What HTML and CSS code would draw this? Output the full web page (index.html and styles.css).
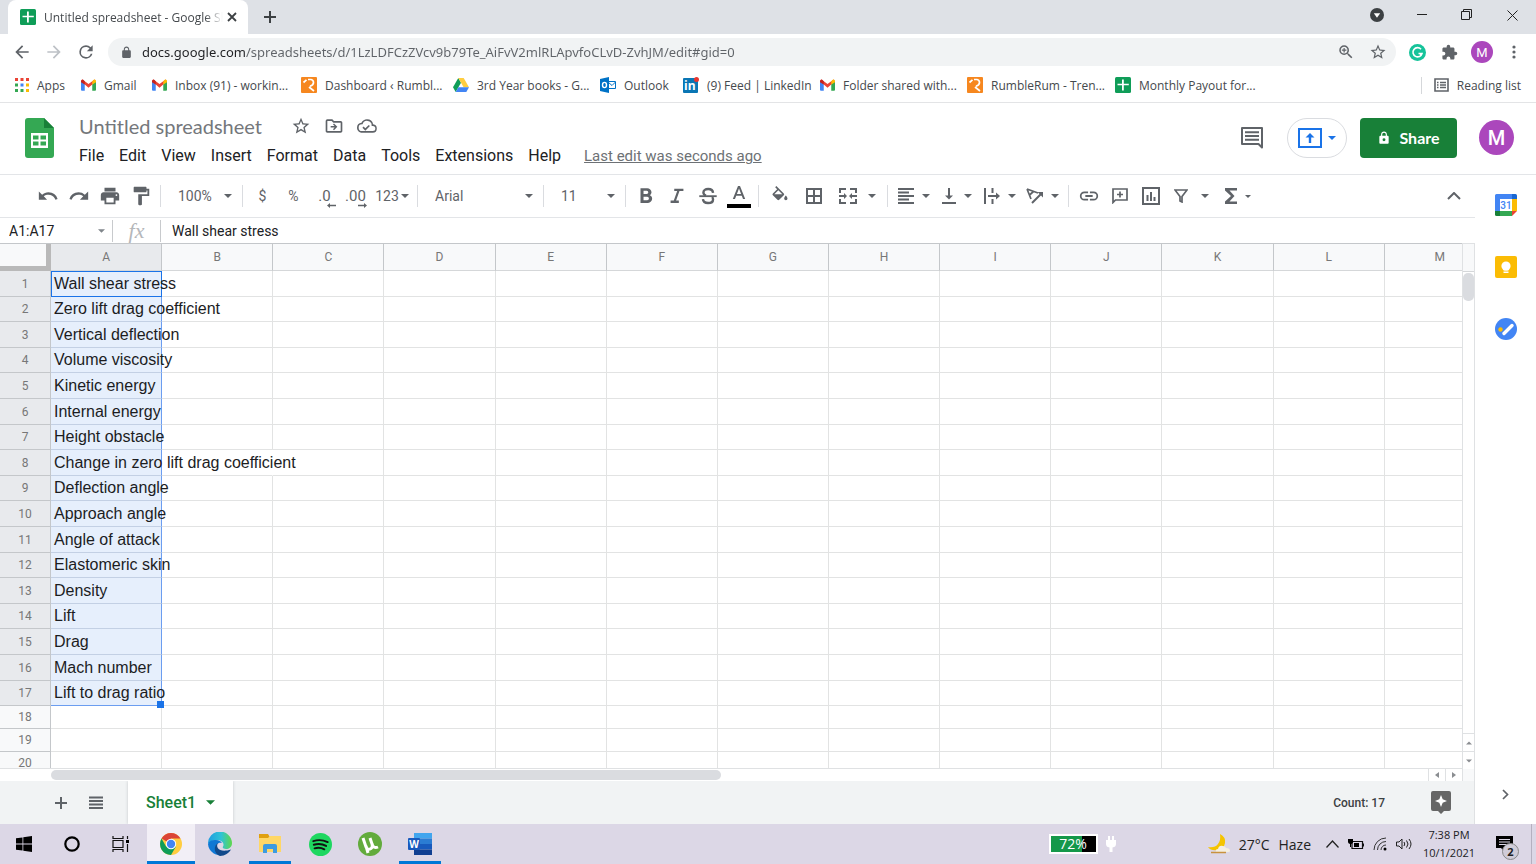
FILE: index.html
```html
<!DOCTYPE html>
<html lang="en">
<head>
<meta charset="utf-8">
<title>Untitled spreadsheet - Google Sheets</title>
<link rel="stylesheet" href="styles.css">
</head>
<body>
<svg class="sprite" aria-hidden="true">
  <symbol id="caret" viewBox="0 0 8 4"><path d="M0 0h8L4 4z"/></symbol>
  <symbol id="gmail" viewBox="0 0 16 12"><path fill="#4285f4" d="M0 2v9q0 1 1 1h3V4.500z"/><path fill="#34a853" d="M16 2v9q0 1-1 1h-3V4.500z"/><path fill="#ea4335" d="M1.500 0L8 4.800 14.500 0 16 2 8 9 0 2z"/><path fill="#c5221f" d="M0 2q0-2 2-1.800L4 2v3.500L0 3z"/><path fill="#fbbc04" d="M16 2q0-2-2-1.800L12 2v3.500L16 3z"/></symbol>
  <symbol id="sheetmark" viewBox="0 0 16 16"><rect width="16" height="16" rx="1.500" fill="#0f9d58"/><path fill="#fff" d="M7 2.500h1.800v4.200h5v1.600h-5v5.200H7V8.300H2.500V6.700H7z"/></symbol>
  <symbol id="rumble" viewBox="0 0 16 16"><rect width="16" height="16" rx="1" fill="#f6871f"/><path d="M2.500 5.500l3-2.700M7 2.500h3q2.500.5 2.500 3T9 9.300M8 10l5 4" fill="none" stroke="#fff" stroke-width="1.700"/></symbol>
  <symbol id="star" viewBox="0 0 24 24"><path d="M22 9.240l-7.190-.62L12 2 9.190 8.630 2 9.240l5.460 4.730L5.820 21 12 17.270 18.180 21l-1.630-7.030L22 9.240zM12 15.400l-3.760 2.270 1-4.280-3.320-2.880 4.380-.38L12 6.100l1.710 4.040 4.380.38-3.320 2.880 1 4.280L12 15.400z"/></symbol>
  <symbol id="lock" viewBox="0 0 24 24"><path d="M18 8h-1V6c0-2.760-2.240-5-5-5S7 3.240 7 6v2H6c-1.100 0-2 .9-2 2v10c0 1.100.9 2 2 2h12c1.100 0 2-.9 2-2V10c0-1.100-.9-2-2-2zM9 6c0-1.660 1.340-3 3-3s3 1.340 3 3v2H9V6z"/></symbol>
</svg>

<header class="browser">
  <div class="tabstrip">
    <div class="tab">
      <svg width="16" height="16"><use href="#sheetmark"/></svg>
      <span class="tab-title">Untitled spreadsheet - Google Sheets</span>
      <button class="plain" aria-label="Close tab"><svg width="10" height="10" viewBox="0 0 10 10"><path d="M1 1l8 8M9 1L1 9" stroke="#3c4043" stroke-width="1.800"/></svg></button>
    </div>
    <button class="plain newtab" aria-label="New tab"><svg width="12" height="12" viewBox="0 0 12 12"><path d="M6 0v12M0 6h12" stroke="#3c4043" stroke-width="2"/></svg></button>
    <div class="window-controls">
      <button class="plain" aria-label="Search tabs"><svg width="14" height="14" viewBox="0 0 14 14"><circle cx="7" cy="7" r="7" fill="#3c4043"/><path d="M3.800 5.200h6.400L7 9.800z" fill="#fff"/></svg></button>
      <button class="plain" aria-label="Minimize"><svg width="10" height="10" viewBox="0 0 10 10"><path d="M0 4.500h10" stroke="#222"/></svg></button>
      <button class="plain" aria-label="Restore"><svg width="12" height="12" viewBox="0 0 12 12"><path d="M.5 2.500h8v8h-8zM2.500 2.500v-2h8v8h-2" fill="none" stroke="#222"/></svg></button>
      <button class="plain" aria-label="Close"><svg width="11" height="11" viewBox="0 0 11 11"><path d="M.5.5l10 10M10.500.5l-10 10" stroke="#222"/></svg></button>
    </div>
  </div>

  <div class="navbar">
    <button class="plain" aria-label="Back"><svg width="20" height="20" viewBox="0 0 24 24" fill="#5f6368"><path d="M20 11H7.830l5.590-5.590L12 4l-8 8 8 8 1.410-1.410L7.830 13H20v-2z"/></svg></button>
    <button class="plain" aria-label="Forward"><svg width="20" height="20" viewBox="0 0 24 24" fill="#bdc1c6"><path d="M12 4l-1.410 1.410L16.170 11H4v2h12.170l-5.580 5.590L12 20l8-8z"/></svg></button>
    <button class="plain" aria-label="Reload"><svg width="20" height="20" viewBox="0 0 24 24" fill="#5f6368"><path d="M17.650 6.350A7.960 7.960 0 0 0 12 4a8 8 0 1 0 7.730 10h-2.080A6 6 0 1 1 12 6c1.660 0 3.140.69 4.220 1.780L13 11h7V4l-2.350 2.350z"/></svg></button>
    <div class="omnibox">
      <svg width="13" height="13" viewBox="0 0 24 24" fill="#5f6368"><use href="#lock"/></svg>
      <input class="address" aria-label="Address" value="docs.google.com/spreadsheets/d/1LzLDFCzZVcv9b79Te_AiFvV2mlRLApvfoCLvD-ZvhJM/edit#gid=0">
      <button class="plain" aria-label="Zoom"><svg width="18" height="18" viewBox="0 0 24 24" fill="#5f6368"><path d="M15.500 14h-.79l-.28-.27A6.470 6.470 0 0 0 16 9.500 6.500 6.500 0 1 0 9.500 16c1.610 0 3.090-.59 4.230-1.570l.27.28v.79l5 4.990L20.490 19l-4.990-5zm-6 0C7.010 14 5 11.990 5 9.500S7.010 5 9.500 5 14 7.010 14 9.500 11.990 14 9.500 14zM10.300 6.500H8.700v2.200H6.500v1.600h2.200v2.200h1.600v-2.200h2.200V8.700h-2.200z"/></svg></button>
      <button class="plain" aria-label="Bookmark"><svg width="18" height="18" fill="#5f6368"><use href="#star"/></svg></button>
    </div>
    <div class="extensions">
      <button class="plain" aria-label="Grammarly"><svg width="17" height="17" viewBox="0 0 17 17"><circle cx="8.500" cy="8.500" r="8.500" fill="#15c39a"/><path d="M12 5.200A4.600 4.600 0 1 0 13 9.500H9.500M11 11.500l2-2" fill="none" stroke="#fff" stroke-width="1.600"/></svg></button>
      <button class="plain" aria-label="Extensions"><svg width="17" height="17" viewBox="0 0 24 24" fill="#5f6368"><path d="M20.500 11H19V7c0-1.100-.9-2-2-2h-4V3.500a2.500 2.500 0 0 0-5 0V5H4c-1.100 0-1.990.9-1.990 2v3.800H3.500a2.700 2.700 0 0 1 0 5.400H2V20c0 1.100.9 2 2 2h3.800v-1.500a2.700 2.700 0 0 1 5.400 0V22H17c1.100 0 2-.9 2-2v-4h1.500a2.500 2.500 0 0 0 0-5z"/></svg></button>
      <button class="avatar small" aria-label="Profile">M</button>
      <button class="plain" aria-label="Browser menu"><svg width="4" height="14" viewBox="0 0 4 14" fill="#5f6368"><circle cx="2" cy="2" r="1.600"/><circle cx="2" cy="7" r="1.600"/><circle cx="2" cy="12" r="1.600"/></svg></button>
    </div>
  </div>

  <nav class="bookmarks">
    <a href="#"><svg width="14" height="14" viewBox="0 0 14 14"><path fill="#ea4335" d="M0 0h3v3H0zM5.500 0h3v3h-3zM11 0h3v3h-3z"/><path fill="#34a853" d="M0 5.500h3v3H0zM0 11h3v3H0z"/><path fill="#4285f4" d="M5.500 5.500h3v3h-3z"/><path fill="#fbbc04" d="M11 5.500h3v3h-3zM11 11h3v3h-3z"/><path fill="#34a853" d="M5.500 11h3v3h-3z"/></svg>Apps</a>
    <a href="#"><svg width="15" height="12"><use href="#gmail"/></svg>Gmail</a>
    <a href="#"><svg width="15" height="12"><use href="#gmail"/></svg>Inbox (91) - workin...</a>
    <a href="#"><svg width="16" height="16"><use href="#rumble"/></svg>Dashboard ‹ Rumbl...</a>
    <a href="#"><svg width="16" height="14" viewBox="0 0 16 14"><path fill="#0f9d58" d="M5.300 0L8 4.700 2.700 14 0 9.300z"/><path fill="#ffcd40" d="M5.300 0h5.400L16 9.300h-5.400z"/><path fill="#4285f4" d="M5.400 9.300H16L13.300 14H2.700z"/></svg>3rd Year books - G...</a>
    <a href="#"><svg width="16" height="16" viewBox="0 0 16 16"><path fill="#fff" stroke="#0072c6" d="M8 4.500h7.500v7H8z"/><path d="M8 5l4 3.500L15.500 5" fill="none" stroke="#0072c6"/><path fill="#0072c6" d="M0 2l9-2v16l-9-2z"/><ellipse cx="4.500" cy="8" rx="2" ry="2.600" fill="none" stroke="#fff" stroke-width="1.400"/></svg>Outlook</a>
    <a href="#"><svg width="16" height="16" viewBox="0 0 16 16"><rect y="1" width="15" height="15" rx="1" fill="#0a76b4"/><text x="1" y="13" fill="#fff" class="linkedin">in</text><circle cx="13.500" cy="2.500" r="2.500" fill="#e8362f"/></svg>(9) Feed | LinkedIn</a>
    <a href="#"><svg width="15" height="12"><use href="#gmail"/></svg>Folder shared with...</a>
    <a href="#"><svg width="16" height="16"><use href="#rumble"/></svg>RumbleRum - Tren...</a>
    <a href="#"><svg width="16" height="16"><use href="#sheetmark"/></svg>Monthly Payout for...</a>
    <button class="reading"><svg width="15" height="14" viewBox="0 0 15 14"><path d="M1 1h13v12H1z" fill="none" stroke="#5f6368" stroke-width="1.600"/><path d="M3 4.500h1.500M6 4.500h6M3 7h1.500M6 7h6M3 9.500h1.500M6 9.500h6" stroke="#5f6368" stroke-width="1.300"/></svg>Reading list</button>
  </nav>
</header>

<section class="doc-header">
  <svg width="29" height="40" viewBox="0 0 29 40"><path fill="#34a853" d="M3 0h16l10 10v27q0 3-3 3H3q-3 0-3-3V3q0-3 3-3z"/><path fill="#188038" d="M19 0l10 10H19z"/><path fill="#fff" fill-rule="evenodd" d="M6 15h17v15H6zm2 2.500v4h5.500v-4zm7.500 0v4H21v-4zM8 23.500v4h5.500v-4zm7.500 0v4H21v-4z"/></svg>
  <div class="doc-info">
    <div class="title-line">
      <input class="doc-title" aria-label="Document title" value="Untitled spreadsheet">
      <button class="plain" aria-label="Star"><svg width="20" height="20" fill="#5f6368"><use href="#star"/></svg></button>
      <button class="plain" aria-label="Move"><svg width="20" height="20" viewBox="0 0 24 24" fill="#5f6368"><path d="M20 6h-8l-2-2H4a2 2 0 0 0-2 2v12c0 1.100.9 2 2 2h16c1.100 0 2-.9 2-2V8c0-1.100-.9-2-2-2zm0 12H4V6h5.200l2 2H20v10zM12 17l4-4-4-4-1.200 1.200 1.900 1.900H8v1.800h4.700l-1.900 1.900z"/></svg></button>
      <button class="plain" aria-label="Saved to Drive"><svg width="20" height="20" viewBox="0 0 24 24" fill="#5f6368"><path d="M19.350 10.040A7.490 7.490 0 0 0 12 4C9.110 4 6.600 5.640 5.350 8.040A5.990 5.990 0 0 0 0 14c0 3.310 2.690 6 6 6h13a5 5 0 0 0 .35-9.960zM19 18H6a4 4 0 0 1 0-8h.7A5.500 5.500 0 0 1 17.500 12H19a3 3 0 0 1 0 6zm-9-3.200l-2.100-2.100-1.400 1.400 3.500 3.500 5.500-5.500-1.400-1.400z"/></svg></button>
    </div>
    <nav class="menus">
      <button>File</button><button>Edit</button><button>View</button><button>Insert</button><button>Format</button><button>Data</button><button>Tools</button><button>Extensions</button><button>Help</button>
      <a href="#">Last edit was seconds ago</a>
    </nav>
  </div>
  <div class="doc-actions">
    <button class="plain" aria-label="Comments"><svg width="22" height="22" viewBox="0 0 22 22"><path d="M1 1h20v19.500L17.500 17H1z" fill="none" stroke="#5f6368" stroke-width="2" stroke-linejoin="round"/><path d="M4 5.200h14M4 9h14M4 12.800h14" stroke="#5f6368" stroke-width="2"/></svg></button>
    <button class="present" aria-label="Present"><svg width="24" height="20" viewBox="0 0 24 20"><path d="M1 1h22v18H1z" fill="none" stroke="#1a73e8" stroke-width="2"/><path d="M12 5l4.500 4.500h-3.300V15h-2.400V9.500H7.500z" fill="#1a73e8"/></svg><svg width="8" height="4" fill="#1a73e8"><use href="#caret"/></svg></button>
    <button class="share"><svg width="14" height="14" viewBox="0 0 24 24" fill="#fff"><path fill-rule="evenodd" d="M18 8h-1V6c0-2.760-2.240-5-5-5S7 3.240 7 6v2H6c-1.100 0-2 .9-2 2v10c0 1.100.9 2 2 2h12c1.100 0 2-.9 2-2V10c0-1.100-.9-2-2-2zM9 6c0-1.660 1.340-3 3-3s3 1.340 3 3v2H9V6zm3 6.500a2.500 2.500 0 1 0 0 5 2.500 2.500 0 0 0 0-5z"/></svg>Share</button>
    <button class="avatar" aria-label="Google account">M</button>
  </div>
</section>

<div class="workspace">
  <main class="sheet">
    <div class="toolbar" role="toolbar">
      <button aria-label="Undo"><svg width="22" height="22" viewBox="0 0 24 24"><path d="M12.500 8c-2.650 0-5.050.99-6.900 2.600L2 7v9h9l-3.620-3.620A8 8 0 0 1 20.100 16l2.370-.78A10.500 10.500 0 0 0 12.500 8z"/></svg></button>
      <button aria-label="Redo"><svg width="22" height="22" viewBox="0 0 24 24"><path d="M18.400 10.600A10.450 10.450 0 0 0 11.500 8a10.500 10.500 0 0 0-9.960 7.220L3.900 16a8 8 0 0 1 12.720-3.620L13 16h9V7l-3.600 3.600z"/></svg></button>
      <button aria-label="Print"><svg width="22" height="22" viewBox="0 0 24 24"><path fill-rule="evenodd" d="M19 8H5c-1.660 0-3 1.340-3 3v6h4v4h12v-4h4v-6c0-1.660-1.340-3-3-3zm-3 11H8v-5h8v5zm3-7a1 1 0 1 1 0-2 1 1 0 0 1 0 2zM18 3H6v4h12V3z"/></svg></button>
      <button aria-label="Paint format"><svg width="22" height="22" viewBox="0 0 24 24"><path d="M18 4V3c0-.55-.45-1-1-1H5c-.55 0-1 .45-1 1v4c0 .55.45 1 1 1h12c.55 0 1-.45 1-1V6h1v4H9v11c0 .55.450 1 1 1h2c.55 0 1-.45 1-1v-9h8V4h-3z"/></svg></button>
      <i class="sep"></i>
      <label class="pick"><select aria-label="Zoom"><option>100%</option></select><svg width="8" height="4"><use href="#caret"/></svg></label>
      <i class="sep"></i>
      <button aria-label="Currency">$</button>
      <button aria-label="Percent">%</button>
      <button class="decimals" aria-label="Decrease decimals">.0<svg width="9" height="5" viewBox="0 0 9 5"><path d="M0 2.500L3 0v1.800h6v1.400H3V5z"/></svg></button>
      <button class="decimals" aria-label="Increase decimals">.00<svg width="9" height="5" viewBox="0 0 9 5"><path d="M9 2.500L6 0v1.800H0v1.400h6V5z"/></svg></button>
      <button class="formats" aria-label="More formats">123<svg width="8" height="4"><use href="#caret"/></svg></button>
      <i class="sep"></i>
      <label class="pick wide"><select aria-label="Font"><option>Arial</option></select><svg width="8" height="4"><use href="#caret"/></svg></label>
      <i class="sep"></i>
      <label class="pick"><select aria-label="Font size"><option>11</option></select><svg width="8" height="4"><use href="#caret"/></svg></label>
      <i class="sep"></i>
      <button aria-label="Bold"><svg width="22" height="22" viewBox="0 0 24 24"><path fill-rule="evenodd" d="M16.100 11.300c1.100-.8 1.900-2 1.900-3.300 0-2.700-2.100-4.500-4.700-4.500H6v16h8.200c2.500 0 4.500-2 4.500-4.400 0-1.700-1-3.200-2.600-3.800zM9.300 6.300h3.500a1.700 1.700 0 0 1 0 3.400H9.300zm4 10.400h-4v-3.800h4a1.900 1.900 0 0 1 0 3.800z"/></svg></button>
      <button aria-label="Italic"><svg width="22" height="22" viewBox="0 0 24 24"><path d="M9 4v2.500h3.200L8.500 17H5v2.500h9V17h-3L14.700 6.500H19V4z"/></svg></button>
      <button aria-label="Strikethrough"><svg width="22" height="22" viewBox="0 0 24 24"><path d="M17.500 8.500C17.300 5.700 15 4.300 12.200 4.300c-3 0-5.200 1.400-5.200 3.900 0 1.600 1 2.700 2.800 3.400M6.500 15.500c.2 2.800 2.500 4.200 5.600 4.200 3.200 0 5.400-1.400 5.400-4 0-1-.3-1.900-1-2.600" fill="none" stroke="#5f6368" stroke-width="2.600"/><path d="M2.500 11.200h19v2h-19z"/></svg></button>
      <button aria-label="Text color"><svg width="24" height="24" viewBox="0 0 24 24"><path fill-rule="evenodd" d="M11 2L5.800 15H8l1.200-3.200h5.600L16 15h2.200L13 2zm-1.100 8L12 4.400 14.100 10z"/><path d="M0 20h24v4H0z" fill="#000"/></svg></button>
      <i class="sep"></i>
      <button class="mid" aria-label="Fill color"><svg width="20" height="20" viewBox="0 0 24 24"><path fill-rule="evenodd" d="M16.560 8.940L7.620 0 6.210 1.410l2.380 2.380-5.150 5.150a1.490 1.490 0 0 0 0 2.120l5.500 5.500a1.500 1.500 0 0 0 2.120 0l5.500-5.500a1.490 1.490 0 0 0 0-2.120zM5.210 10L10 5.210 14.790 10H5.210zM19 11.500s-2 2.170-2 3.500a2 2 0 0 0 4 0c0-1.330-2-3.500-2-3.500z"/></svg></button>
      <button class="mid" aria-label="Borders"><svg width="16" height="16" viewBox="0 0 16 16"><path d="M1 1h14v14H1zM8 1v14M1 8h14" class="line"/></svg></button>
      <button class="merge" aria-label="Merge cells"><svg width="18" height="16" viewBox="0 0 18 16"><path d="M1 5V1h6M11 1h6v4M1 11v4h6M11 15h6v-4M0 8h6M18 8h-6" class="line"/><path d="M5 5l3 3-3 3zM13 5l-3 3 3 3z"/></svg><svg width="8" height="4"><use href="#caret"/></svg></button>
      <i class="sep"></i>
      <button class="drop" aria-label="Horizontal align"><svg width="16" height="16" viewBox="0 0 16 16"><path d="M0 1h16M0 4.500h11M0 8h16M0 11.500h11M0 15h16" class="line"/></svg><svg width="8" height="4"><use href="#caret"/></svg></button>
      <button class="drop" aria-label="Vertical align"><svg width="14" height="16" viewBox="0 0 14 16"><path d="M7 0v9M0 15h14" class="line"/><path d="M3 7.500h8L7 11.500z"/></svg><svg width="8" height="4"><use href="#caret"/></svg></button>
      <button class="drop" aria-label="Text wrapping"><svg width="16" height="16" viewBox="0 0 16 16"><path d="M1 0v16M8.500 0v5M8.500 11v5M4 8h9" class="line"/><path d="M12 4.500L16 8l-4 3.500z"/></svg><svg width="8" height="4"><use href="#caret"/></svg></button>
      <button class="drop" aria-label="Text rotation"><svg width="17" height="16" viewBox="0 0 17 16"><path d="M1 1l11 4M1 1l4 10M3 7.500l5-4.500" class="line thin"/><path d="M6 15l9-9" class="line"/><path d="M11.500 4H17v5.500z"/></svg><svg width="8" height="4"><use href="#caret"/></svg></button>
      <i class="sep"></i>
      <button aria-label="Insert link"><svg width="22" height="22" viewBox="0 0 24 24"><path d="M3.900 12A3.100 3.100 0 0 1 7 8.900h4V7H7a5 5 0 0 0 0 10h4v-1.900H7A3.100 3.100 0 0 1 3.900 12zM8 13h8v-2H8v2zm9-6h-4v1.900h4a3.100 3.100 0 0 1 0 6.200h-4V17h4a5 5 0 0 0 0-10z"/></svg></button>
      <button aria-label="Insert comment"><svg width="16" height="16" viewBox="0 0 16 16"><path d="M1 14.500V1h14v11H3.500z" class="line thin"/><path d="M8 3.500v6M5 6.500h6" class="line thin"/></svg></button>
      <button aria-label="Insert chart"><svg width="18" height="18" viewBox="0 0 18 18"><path d="M1 1h16v16H1zM5.500 8v6M9 5v9M12.500 10v4" class="line"/></svg></button>
      <button class="filter" aria-label="Filter"><svg width="14" height="14" viewBox="0 0 14 14"><path d="M1 1h12L8 7.500V13L6 12V7.500z" class="line thin"/></svg><svg width="8" height="4"><use href="#caret"/></svg></button>
      <button class="drop" aria-label="Functions"><svg width="12" height="16" viewBox="0 0 12 16"><path d="M12 2.500V0H0v2.500L6 8l-6 5.500V16h12v-2.500H4.500L9.500 8l-5-5.500z"/></svg><svg width="6" height="3"><use href="#caret"/></svg></button>
      <button class="collapse" aria-label="Hide menus"><svg width="14" height="8" viewBox="0 0 14 8"><path d="M1 7l6-6 6 6" class="line"/></svg></button>
    </div>

    <div class="formula-bar">
      <input class="name-box" aria-label="Name box" value="A1:A17">
      <svg width="7" height="4" fill="#80868b"><use href="#caret"/></svg>
      <i class="sep"></i>
      <span class="fx">fx</span>
      <i class="sep"></i>
      <input class="formula" aria-label="Formula" value="Wall shear stress">
    </div>

    <div class="grid-area">
      <div class="cells">
        <table>
          <colgroup><col class="col-head"><col span="13"></colgroup>
          <thead><tr><th class="corner" aria-label="Select all"></th><th class="on">A</th><th>B</th><th>C</th><th>D</th><th>E</th><th>F</th><th>G</th><th>H</th><th>I</th><th>J</th><th>K</th><th>L</th><th>M</th></tr></thead>
          <tbody id="rows"></tbody>
        </table>
      </div>
      <div class="vscroll"><i class="thumb"></i><button aria-label="Scroll up"><svg class="up" width="6" height="4"><use href="#caret"/></svg></button><button aria-label="Scroll down"><svg width="6" height="4"><use href="#caret"/></svg></button></div>
      <div class="hscroll"><i class="thumb"></i><button aria-label="Scroll left"><svg width="4" height="6" viewBox="0 0 4 6"><path d="M4 0v6L0 3z"/></svg></button><button aria-label="Scroll right"><svg width="4" height="6" viewBox="0 0 4 6"><path d="M0 0v6l4-3z"/></svg></button></div>
      <div class="scroll-corner"></div>
    </div>

    <footer class="sheet-bar">
      <button class="plain" aria-label="Add sheet"><svg width="12" height="12" viewBox="0 0 12 12"><path d="M6 0v12M0 6h12" class="line"/></svg></button>
      <button class="plain" aria-label="All sheets"><svg width="14" height="13" viewBox="0 0 14 13"><path d="M0 1.500h14M0 5h14M0 8.500h14M0 12h14" class="line"/></svg></button>
      <button class="sheet-tab">Sheet1<svg width="9" height="5"><use href="#caret"/></svg></button>
      <button class="count">Count: 17</button>
      <button class="plain explore" aria-label="Explore"><svg width="20" height="23" viewBox="0 0 20 23"><path fill="#666" d="M2 0h16q2 0 2 2v16q0 2-2 2h-5l-3 3-3-3H2q-2 0-2-2V2q0-2 2-2z"/><path fill="#fff" d="M10 4l1.700 4.300L16 10l-4.300 1.700L10 16l-1.700-4.300L4 10l4.300-1.700z"/></svg></button>
    </footer>
  </main>

  <aside class="side">
    <button class="plain" aria-label="Calendar"><svg width="22" height="22" viewBox="0 0 22 22"><path fill="#4285f4" d="M1.500 0H17v5H5v12H0V1.500Q0 0 1.500 0z"/><path fill="#1967d2" d="M17 0h3.500Q22 0 22 1.500V5h-5z"/><path fill="#fbbc04" d="M17 5h5v12h-5z"/><path fill="#34a853" d="M5 17h12v5H5z"/><path fill="#188038" d="M0 17h5v5H1.500Q0 22 0 20.500z"/><path fill="#ea4335" d="M17 17h5l-5 5z"/><path fill="#fff" d="M5 5h12v12H5z"/><text x="11" y="15" text-anchor="middle" class="day">31</text></svg></button>
    <button class="plain" aria-label="Keep"><svg width="22" height="22" viewBox="0 0 22 22"><rect width="22" height="22" rx="2" fill="#fbbc04"/><circle cx="11" cy="10" r="4.600" fill="#fff"/><path fill="#fff" d="M8.500 12h5v2.500h-5zM8.500 15.500h5V17h-5z"/></svg></button>
    <button class="plain" aria-label="Tasks"><svg width="22" height="22" viewBox="0 0 22 22"><circle cx="11" cy="11" r="11" fill="#4285f4"/><circle cx="5.500" cy="11.500" r="2.200" fill="#fbbc04"/><path d="M9 15.500l8-8" stroke="#fff" stroke-width="3.400" stroke-linecap="round"/></svg></button>
    <button class="plain hide-side" aria-label="Hide side panel"><svg width="7" height="11" viewBox="0 0 7 11"><path d="M1 1l4.500 4.500L1 10" class="line thin"/></svg></button>
  </aside>
</div>

<footer class="taskbar">
  <button aria-label="Start"><svg width="16" height="16" viewBox="0 0 16 16"><path d="M0 2.300L6.500 1.400v6.200H0zM7.300 1.300L16 0v7.600H7.300zM0 8.400h6.500v6.200L0 13.700zM7.300 8.400H16V16l-8.700-1.300z"/></svg></button>
  <button aria-label="Cortana"><svg width="16" height="16" viewBox="0 0 16 16"><circle cx="8" cy="8" r="6.700" fill="none" stroke="#000" stroke-width="2.200"/></svg></button>
  <button aria-label="Task view"><svg width="17" height="16" viewBox="0 0 17 16"><path d="M1 0v2.500h10V0M1 16v-2.500h10V16M1 4.500h10v7H1zM15.500 0v3M15.500 8v8" fill="none" stroke="#111" stroke-width="1.200"/><path d="M14 4h3v3h-3z"/></svg></button>
  <button class="running active" aria-label="Chrome"><svg width="22" height="22" viewBox="0 0 22 22"><circle cx="11" cy="11" r="11" fill="#ffcd40"/><path fill="#db4437" d="M11 11L1.500 5.500a11 11 0 0 1 19 0H11z"/><path fill="#0f9d58" d="M1.500 5.500A11 11 0 0 0 11 22l4.800-8.300L11 11 6.200 13.700z"/><circle cx="11" cy="11" r="5.200" fill="#fff"/><circle cx="11" cy="11" r="4.200" fill="#4285f4"/></svg></button>
  <button aria-label="Edge"><svg width="24" height="24" viewBox="0 0 24 24"><defs><linearGradient id="edge"><stop offset="0" stop-color="#1f9de0"/><stop offset=".55" stop-color="#2fc3d6"/><stop offset="1" stop-color="#5fd84a"/></linearGradient></defs><path fill="url(#edge)" d="M0 12A12 12 0 0 1 24 11c0 4-3 6-6 6-2 0-4-1-3-2.500C17 11 13 8 9 8 4 8 1 10 0 12z"/><path fill="#0f78d4" d="M0 12C1 9 4 7.500 8 8c3 0 5.500 1.500 6 3-5-1-7 3-6 7 1 3 4 5 8 4.500A12 12 0 0 1 0 12z"/><path fill="#114a8b" d="M10 11c-3 5 2 10 13 6.500C21 21 17 24 12 24 6 22 5 14 10 11z"/></svg></button>
  <button class="running" aria-label="File Explorer"><svg width="22" height="20" viewBox="0 0 22 20"><path fill="#e0a010" d="M0 0h9l1.500 2.500V5H0z"/><path fill="#ffd766" d="M0 4h9l2-2h11v16H0z"/><path fill="#3d9be0" d="M6 10h10q2 0 2 2v7h-4v-4H8v4H4v-7q0-2 2-2z"/></svg></button>
  <button aria-label="Spotify"><svg width="23" height="23" viewBox="0 0 24 24"><circle cx="12" cy="12" r="12" fill="#1ed760"/><path d="M4.500 8.500Q12 6 19.500 9.500M5 12.300q7-2 12.800 1.200M5.800 16q5.500-1.500 10.200 1" fill="none" stroke="#111" stroke-width="2" stroke-linecap="round"/></svg></button>
  <button aria-label="uTorrent"><svg width="24" height="24" viewBox="0 0 24 24"><circle cx="12" cy="12" r="12" fill="#62ab3c"/><path d="M5 6l3 9q1.500 3.500 5 1.500 2-1.500 1-4.500l-2-6M14 12q1.500 5 6 3M8 14l2 7" fill="none" stroke="#fff" stroke-width="3"/></svg></button>
  <button class="running" aria-label="Word"><svg width="24" height="22" viewBox="0 0 24 22"><path fill="#41a5ee" d="M6 0h18v5.500H6z"/><path fill="#2b7cd3" d="M6 5.500h18V11H6z"/><path fill="#185abd" d="M6 11h18v5.500H6z"/><path fill="#103f91" d="M6 16.500h18V22H6z"/><rect y="5" width="12" height="12" rx="1" fill="#185abd"/><text x="6" y="14.500" text-anchor="middle" class="word">W</text></svg></button>
  <div class="tray">
    <span class="battery">72%</span>
    <svg class="plug" width="10" height="16" viewBox="0 0 10 16"><path fill="#fff" d="M2 0h2v4h2V0h2v4h2v4q0 3-3.500 3.500V16h-3v-4.500Q0 11 0 8V4h2z"/></svg>
    <button class="weather"><svg width="22" height="20" viewBox="0 0 22 20"><path fill="#f5c400" d="M12 0q6 3 5 9t-8 7q-6 1-9-3 7 1 10-3t2-10z"/><path fill="#f5efe0" d="M8 18q-1-3 2-3 1-4 5-3 2 0 3 2 4 0 4 3 0 1-2 1z"/><path d="M3 18.500h15" stroke="#c8923e" stroke-width="1.500"/></svg><span>27°C</span><span>Haze</span></button>
    <div class="status">
      <svg width="13" height="8" viewBox="0 0 13 8"><path d="M.5 7.500l6-6.500 6 6.500" fill="none" stroke="#222" stroke-width="1.300"/></svg>
      <svg width="16" height="12" viewBox="0 0 16 12"><path d="M4 3.500h10.500v7H4zM15.500 5.500v3" fill="none" stroke="#111" stroke-width="1.200"/><path d="M6 5h5v4H6zM0 1h5v3.500q-1 1.500-2 1.500V9H2V6Q0 5.500 0 4z"/></svg>
      <svg width="14" height="14" viewBox="0 0 14 14"><path d="M1 13A12 12 0 0 1 13 1M4.500 13A8.500 8.500 0 0 1 13 4.500M8 13a5 5 0 0 1 5-5" fill="none" stroke="#333"/><circle cx="12" cy="12" r="1.500"/></svg>
      <svg width="16" height="12" viewBox="0 0 16 12"><path d="M.5 4v4H3l3 3V1L3 4zM8 4q1.500 2 0 4M10.500 2.500q3 3.500 0 7M13 1q4 5 0 10" fill="none" stroke="#222"/></svg>
    </div>
    <time>7:38 PM<br>10/1/2021</time>
    <button class="notices" aria-label="Notifications"><svg width="17" height="16" viewBox="0 0 17 16"><path d="M0 0h17v12H9v4l-4-4H0z"/><path d="M3 3.500h11M3 6h11M3 8.500h8" stroke="#dcd7e6"/></svg><span class="badge">2</span></button>
  </div>
</footer>
<script src="grid.js"></script>
</body>
</html>
```

FILE: styles.css
```css
* { box-sizing: border-box; }
body {
  margin: 0;
  height: 100vh;
  display: flex;
  flex-direction: column;
  overflow: hidden;
  background: #fff;
  color: #202124;
  font-family: Roboto, sans-serif;
}
button, input, select { font: inherit; color: inherit; border: 0; padding: 0; margin: 0; background: none; outline: 0; }
button { display: flex; align-items: center; justify-content: center; white-space: nowrap; }
svg { flex: none; display: block; }
a { color: inherit; text-decoration: none; }
.sprite { position: absolute; width: 0; height: 0; }
.line { fill: none; stroke: #5f6368; stroke-width: 2; }
.line.thin { stroke-width: 1.700; }

/* Browser window */
.browser { flex: none; font-family: "Open Sans", sans-serif; border-bottom: 1px solid #e3e4e6; }
.tabstrip { display: flex; height: 34px; background: #dee1e6; padding-left: 8px; }
.tab { display: flex; align-items: center; width: 240px; padding: 0 11px 0 12px; background: #fff; border-radius: 8px 8px 0 0; }
.tab-title {
  flex: 1; min-width: 0; margin: 0 4px 0 8px; overflow: hidden; white-space: nowrap; font-size: 12px; color: #45494d;
  mask-image: linear-gradient(to right, #000 90%, transparent);
}
.newtab { width: 44px; }
.window-controls { display: flex; margin-left: auto; padding-bottom: 4px; }
.window-controls button { width: 45px; }
.window-controls button:last-child { width: 47px; }
.navbar { display: flex; align-items: center; height: 36px; padding-left: 6px; }
.navbar > .plain { width: 32px; }
.omnibox { flex: 1; display: flex; align-items: center; height: 28px; margin-left: 6px; padding: 0 8px 0 12px; border-radius: 14px; background: #f1f3f4; }
.omnibox .plain { width: 32px; }
.omnibox .plain + .plain { width: 20px; margin-left: 6px; }
.address {
  flex: 1; min-width: 0; height: 28px; margin-left: 8px; padding-left: 1px; font: 13px "Noto Sans", sans-serif;
  background: linear-gradient(to right, #202124 104px, #5f6368 104px);
  background-clip: text;
  -webkit-text-fill-color: transparent;
}
.extensions { display: flex; align-items: center; gap: 13px; padding: 0 20px 0 13px; }
.extensions .avatar + .plain { margin-left: 6px; }
.extensions .plain:nth-child(2) { margin-left: 2px; }
.avatar { width: 35px; height: 35px; border-radius: 50%; background: #ab47bc; color: #fff; font: 500 20px Roboto, sans-serif; }
.avatar.small { width: 22px; height: 22px; font-size: 13px; font-weight: 400; }
.bookmarks {
  display: grid; grid-template-columns: 66px 71px 149px 152px 147px 83px 137px 147px 148px 1fr auto; align-items: center;
  height: 32px; padding: 0 15px 2px; font-size: 12px; color: #45494d; white-space: nowrap;
}
.bookmarks a, .reading { display: flex; align-items: center; gap: 8px; }
.reading { padding-left: 12px; border-left: 1px solid #d5d7da; }
.linkedin { font: 700 12px "Open Sans", sans-serif; }

/* Document header */
.doc-header { flex: none; display: flex; align-items: center; height: 71px; padding: 0 22px 2px 25px; }
.doc-info { padding: 8px 0 0 25px; }
.title-line { display: flex; align-items: center; gap: 13px; height: 28px; }
.doc-title { width: 199px; font: 20px Lato, sans-serif; color: #74777b; }
.menus { display: flex; align-items: center; height: 32px; gap: 15px; font-size: 16px; }
.menus a { margin-left: 8px; color: #6d7175; font-size: 15px; text-decoration: underline; }
.doc-actions { display: flex; align-items: center; margin-left: auto; }
.present { width: 60px; height: 40px; gap: 6px; margin: 0 13px 0 24px; border: 1px solid #dadce0; border-radius: 20px; }
.share { width: 97px; height: 40px; gap: 8px; margin-right: 22px; border-radius: 4px; background: #188038; color: #fff; font: 700 16px Lato, sans-serif; }

/* Workspace */
.workspace { flex: 1; min-height: 0; display: flex; border-top: 1px solid #e3e5e8; }
.sheet { flex: 1; min-width: 0; display: flex; flex-direction: column; }
.toolbar { flex: none; display: flex; align-items: center; height: 43px; padding: 0 6px 0 32px; border-bottom: 1px solid #e3e5e8; color: #5f6368; fill: #5f6368; font-size: 14px; }
.toolbar button { flex: none; width: 31px; height: 30px; }
.sep { flex: none; width: 1px; height: 22px; margin: 0 4px; background: #dadce0; }
.pick { flex: none; display: flex; align-items: center; width: 73px; padding: 0 6px 0 13px; }
.pick.wide { width: 117px; }
.pick select { flex: 1; min-width: 0; appearance: none; font-size: 14px; }
.toolbar .decimals { position: relative; font-size: 15px; }
.decimals svg { position: absolute; right: 4px; bottom: 3px; }
.toolbar .formats { width: 42px; gap: 2px; }
.toolbar .mid { width: 34px; }
.toolbar .merge { width: 52px; gap: 11px; }
.toolbar .drop { width: 43px; gap: 8px; }
.toolbar .filter { width: 50px; gap: 13px; }
.toolbar .collapse { margin-left: auto; }
.formula-bar { flex: none; display: flex; align-items: center; height: 25px; font-size: 14px; }
.name-box { width: 98px; padding-left: 9px; }
.formula-bar .sep { margin: 0 0 0 7px; background: #c8cacd; }
.fx { width: 40px; padding-left: 7px; text-align: center; color: #b5b7ba; font: italic 22px/24px "Liberation Serif", serif; }
.formula { flex: 1; margin-left: 11px; }

/* Grid */
.grid-area { flex: 1; min-height: 0; display: grid; grid-template: minmax(0, 1fr) 12px / minmax(0, 1fr) 13px; }
.cells { overflow: hidden; border-top: 1px solid #c4c7ca; border-bottom: 1px solid #dfe1e3; }
table { width: 1496px; table-layout: fixed; border-spacing: 0; }
.col-head { width: 51px; }
th, td { padding: 0; border: 0 solid #e2e3e3; border-width: 0 1px 1px 0; white-space: nowrap; }
th { background: #f8f9fa; color: #777; font-size: 12px; font-weight: 400; border-color: #c4c7ca; }
thead th { height: 27px; border-bottom-color: #d5d7d9; }
th.on { background: #e8eaed; }
thead .corner { border: solid #b9b9b9; border-width: 0 5px 5px 0; }
td { height: 26px; font: 16px/20px "Liberation Sans", Arial, sans-serif; color: #1c1d1f; }
.snug td { height: 25px; }
.spare td { height: 23px; }
td.picked { position: relative; padding-left: 3px; background: #e6effc; border-right-color: #6b9df0; border-bottom-color: #c3d0e4; }
td.picked.first { border: 1px solid #1a73e8; padding-left: 2px; }
td.picked.last { border-bottom-color: #6b9df0; }
td.open { border-right-color: transparent; }
.handle { position: absolute; right: -3px; bottom: -3px; width: 7px; height: 7px; background: #1a73e8; }
.vscroll { display: flex; flex-direction: column; border: solid #dfe1e3; border-width: 1px 1px 0 1px; }
.vscroll::before { content: ""; flex: none; height: 27px; background: #f8f9fa; border-bottom: 1px solid #d5d7d9; }
.thumb { display: block; border-radius: 5px; background: #dadce0; }
.vscroll .thumb { height: 28px; margin: 1px 0 auto; }
.vscroll button { height: 18px; border-top: 1px solid #dfe1e3; fill: #8a8d91; }
.up { transform: rotate(180deg); }
.hscroll { display: flex; padding-left: 51px; }
.hscroll .thumb { width: 47.5%; height: 10px; margin: 1px auto 0 0; }
.hscroll button { width: 17px; border-left: 1px solid #dfe1e3; fill: #8a8d91; }
.scroll-corner { border-left: 1px solid #dfe1e3; border-right: 1px solid #dfe1e3; background: #f8f9fa; }
.sheet-bar { flex: none; display: flex; align-items: center; height: 43px; padding: 0 23px 0 43px; background: #f1f3f4; border-right: 1px solid #dfe1e3; }
.sheet-bar .plain { width: 35px; }
.sheet-bar .sheet-tab { height: 43px; padding: 0 18px; margin-left: 15px; gap: 10px; background: #fff; box-shadow: 0 0 3px #c4c7ca; clip-path: inset(0 -4px); color: #188038; fill: #188038; font-size: 16px; font-weight: 500; }
.count { margin-left: auto; margin-right: 46px; font-size: 12px; font-weight: 500; color: #3c4043; }
.sheet-bar .explore { width: 20px; }
.side { flex: none; width: 61px; display: flex; flex-direction: column; align-items: center; gap: 40px; padding-top: 19px; }
.hide-side { margin: auto 0 24px; }
.day { font: 500 10px Roboto, sans-serif; fill: #4285f4; }

/* Desktop taskbar */
.taskbar { flex: none; display: flex; height: 40px; background: #dcd7e6; font-family: "Open Sans", sans-serif; }
.taskbar > button { width: 48px; border-bottom: 3px solid transparent; padding-top: 3px; }
.taskbar > .running ~ button { width: 42px; margin: 0 4px; }
.taskbar > .running { border-color: #0078d7; }
.taskbar > .active { width: 48px; margin: 0 0 0 3px; background: #f2eff6; }
.word { font: 700 10px "Open Sans", sans-serif; fill: #fff; }
.tray { display: flex; align-items: center; margin-left: auto; padding-right: 4px; }
.battery { width: 49px; height: 20px; border: 2px solid #fff; background: linear-gradient(to right, #15984a 69%, #000 69%); color: #fff; text-align: center; font-size: 14px; line-height: 16px; }
.plug { margin: 0 92px 0 8px; }
.weather { gap: 9px; font-size: 14px; color: #222; }
.status { display: flex; align-items: center; gap: 9px; margin: 0 5px 0 15px; }
.tray time { width: 64px; text-align: center; font-size: 11px; line-height: 18px; white-space: nowrap; }
.notices { position: relative; width: 51px; height: 40px; padding: 0 3px 0 0; border-right: 1px solid #b5b0c0; }
.badge { position: absolute; right: 12px; bottom: 4px; width: 17px; height: 17px; border: 1px solid #888; border-radius: 50%; background: #d0ccd8; font: 700 11px/15px "Open Sans", sans-serif; text-align: center; }
```

FILE: grid.js
```js
const names = [
  "Wall shear stress", "Zero lift drag coefficient", "Vertical deflection", "Volume viscosity",
  "Kinetic energy", "Internal energy", "Height obstacle", "Change in zero lift drag coefficient",
  "Deflection angle", "Approach angle", "Angle of attack", "Elastomeric skin", "Density",
  "Lift", "Drag", "Mach number", "Lift to drag ratio"
];
const body = document.getElementById("rows");
for (let r = 1; r <= 20; r++) {
  const row = body.insertRow();
  const filled = r <= names.length;
  row.className = !filled ? "spare" : (r % 5 === 2 || r % 5 === 4) ? "snug" : "";
  const head = document.createElement("th");
  head.textContent = r;
  if (filled) head.className = "on";
  row.append(head);
  for (let c = 0; c < 13; c++) {
    const cell = row.insertCell();
    if (c === 0 && filled) {
      cell.textContent = names[r - 1];
      cell.className = "picked" + (r === 1 ? " first" : r === names.length ? " last" : "");
      if (r === names.length) {
        const handle = document.createElement("span");
        handle.className = "handle";
        cell.append(handle);
      }
    }
    if (c === 1 && r === 8) cell.className = "open";
  }
}
```
